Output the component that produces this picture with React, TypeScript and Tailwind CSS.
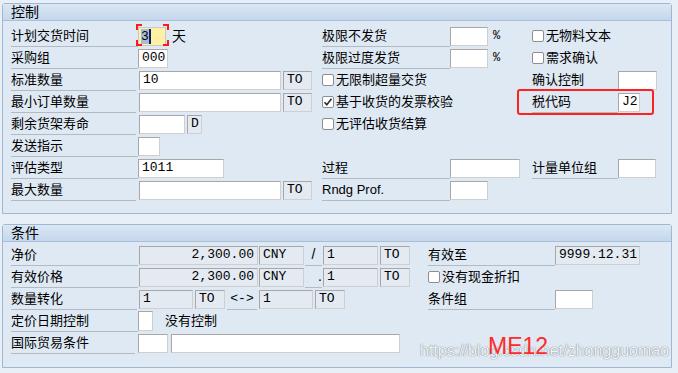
// ME12 采购信息记录 — 控制 / 条件 屏幕
import type { ReactNode } from 'react';

const FONT = "font-['Liberation_Sans','Noto_Sans_CJK_SC',sans-serif]";
const MONO = "font-['Liberation_Mono','Noto_Sans_CJK_SC',monospace]";

function Label({ className = '', children }: { className?: string; children?: ReactNode }) {
  return (
    <div className={`h-[21px] border-b border-[#b3bac2] flex items-center text-[13px] text-black whitespace-nowrap ${className}`}>
      {children}
    </div>
  );
}

function Field({
  className = '',
  value = '',
  readOnly = false,
  right = false,
}: {
  className?: string;
  value?: string;
  readOnly?: boolean;
  right?: boolean;
}) {
  return (
    <div
      className={`h-[19px] border border-[#a7a7a7] border-b-[#cfcfcf] border-r-[#cfcfcf] flex items-center px-[3px] text-[13px] text-black whitespace-nowrap overflow-hidden ${MONO} ${
        readOnly ? 'bg-[#e3eaf1]' : 'bg-white'
      } ${right ? 'justify-end' : ''} ${className}`}
    >
      {value}
    </div>
  );
}

function Check({ label, checked = false }: { label: string; checked?: boolean }) {
  return (
    <div className="flex items-center h-[21px] text-[13px] whitespace-nowrap">
      <div className="w-[12px] h-[12px] border border-[#8e8e8e] bg-white rounded-[2px] mr-[2px] flex items-center justify-center">
        {checked && (
          <svg width="10" height="10" viewBox="0 0 10 10">
            <path d="M1.5 5.2 L3.8 7.8 L8.5 1.8" fill="none" stroke="#2b2b3a" strokeWidth="1.6" />
          </svg>
        )}
      </div>
      {label}
    </div>
  );
}

function Panel({ title, className = '', children }: { title: string; className?: string; children: ReactNode }) {
  return (
    <div className={`w-[670px] border border-[#9fb7d2] rounded-t-[3px] bg-[#dfe9f4] ${className}`}>
      <div className="h-[17px] border-b border-[#a9bfd8] bg-gradient-to-b from-[#dbe7f4] to-[#c4d7ec] flex items-center pl-[8px] text-[14px] text-black">
        {title}
      </div>
      {children}
    </div>
  );
}

const Row = ({ children }: { children: ReactNode }) => <div className="flex h-[22px] items-center">{children}</div>;

export default function App() {
  return (
    <div className={`relative w-[678px] h-[373px] overflow-hidden bg-[#e8eff6] pt-[3px] px-[2px] ${FONT}`}>
      {/* 控制 */}
      <Panel title="控制" className="h-[211px]">
        <div className="pt-[4px] pl-[8px]">
          <Row>
            <div className="flex w-[311px] items-center">
              <Label className="w-[127px]">计划交货时间</Label>
              <div className="h-[19px] w-[28px] bg-[#fff1a4] border border-[#c8c8c8] flex items-center px-[2px]">
                <span className={`bg-[#a9bcd6] text-[13px] leading-[15px] ${MONO}`}>3</span>
                <span className="w-[2px] h-[15px] bg-[#102060]" />
              </div>
              <span className="ml-[6px] text-[14px]">天</span>
            </div>
            <div className="flex w-[210px] items-center">
              <Label className="w-[128px]">极限不发货</Label>
              <Field className="w-[38px]" />
              <span className={`ml-[5px] text-[12px] ${MONO}`}>%</span>
            </div>
            <Check label="无物料文本" />
          </Row>
          <Row>
            <div className="flex w-[311px] items-center">
              <Label className="w-[127px]">采购组</Label>
              <Field className="w-[30px]" value="000" />
            </div>
            <div className="flex w-[210px] items-center">
              <Label className="w-[128px]">极限过度发货</Label>
              <Field className="w-[38px]" />
              <span className={`ml-[5px] text-[12px] ${MONO}`}>%</span>
            </div>
            <Check label="需求确认" />
          </Row>
          <Row>
            <div className="flex w-[311px] items-center gap-[2px]">
              <Label className="w-[125px] mr-[1px]">标准数量</Label>
              <Field className="w-[142px]" value="10" />
              <Field className="w-[29px]" value="TO" readOnly />
            </div>
            <div className="flex w-[210px] items-center">
              <Check label="无限制超量交货" />
            </div>
            <Label className="w-[86px]">确认控制</Label>
            <Field className="w-[39px]" />
          </Row>
          <Row>
            <div className="flex w-[311px] items-center gap-[2px]">
              <Label className="w-[125px] mr-[1px]">最小订单数量</Label>
              <Field className="w-[142px]" />
              <Field className="w-[29px]" value="TO" readOnly />
            </div>
            <div className="flex w-[210px] items-center">
              <Check label="基于收货的发票校验" checked />
            </div>
            <Label className="w-[86px]">税代码</Label>
            <Field className="w-[22px]" value="J2" />
          </Row>
          <Row>
            <div className="flex w-[311px] items-center gap-[2px]">
              <Label className="w-[125px] mr-[1px]">剩余货架寿命</Label>
              <Field className="w-[46px]" />
              <Field className="w-[15px] px-[1px]" value="D" readOnly />
            </div>
            <div className="flex w-[210px] items-center">
              <Check label="无评估收货结算" />
            </div>
          </Row>
          <Row>
            <div className="flex w-[311px] items-center">
              <Label className="w-[127px]">发送指示</Label>
              <Field className="w-[22px]" />
            </div>
          </Row>
          <Row>
            <div className="flex w-[311px] items-center">
              <Label className="w-[127px]">评估类型</Label>
              <Field className="w-[86px]" value="1011" />
            </div>
            <div className="flex w-[210px] items-center">
              <Label className="w-[128px]">过程</Label>
              <Field className="w-[70px]" />
            </div>
            <Label className="w-[86px]">计量单位组</Label>
            <Field className="w-[38px]" />
          </Row>
          <Row>
            <div className="flex w-[311px] items-center gap-[2px]">
              <Label className="w-[125px] mr-[1px]">最大数量</Label>
              <Field className="w-[142px]" />
              <Field className="w-[29px]" value="TO" readOnly />
            </div>
            <div className="flex w-[210px] items-center">
              <Label className="w-[128px]">Rndg Prof.</Label>
              <Field className="w-[38px]" />
            </div>
          </Row>
        </div>
      </Panel>

      {/* 条件 */}
      <Panel title="条件" className="h-[144px] mt-[10px]">
        <div className="pt-[2px] pl-[8px]">
          <Row>
            <div className="flex w-[417px] items-center gap-[1px]">
              <Label className="w-[127px]">净价</Label>
              <Field className="w-[119px]" value="2,300.00" readOnly right />
              <Field className="w-[45px]" value="CNY" readOnly />
              <Label className="w-[17px] justify-center text-[14px]">/</Label>
              <Field className="w-[55px]" value="1" readOnly />
              <Field className="w-[30px] ml-[1px]" value="TO" readOnly />
            </div>
            <Label className="w-[127px]">有效至</Label>
            <Field className="w-[85px]" value="9999.12.31" readOnly />
          </Row>
          <Row>
            <div className="flex w-[417px] items-center gap-[1px]">
              <Label className="w-[127px]">有效价格</Label>
              <Field className="w-[119px]" value="2,300.00" readOnly right />
              <Field className="w-[45px]" value="CNY" readOnly />
              <Label className="w-[17px] justify-end text-[14px]">.</Label>
              <Field className="w-[55px]" value="1" readOnly />
              <Field className="w-[30px] ml-[1px]" value="TO" readOnly />
            </div>
            <Check label="没有现金折扣" />
          </Row>
          <Row>
            <div className="flex w-[417px] items-center gap-[2px]">
              <Label className="w-[126px]">数量转化</Label>
              <Field className="w-[54px]" value="1" readOnly />
              <Field className="w-[30px]" value="TO" readOnly />
              <Label className={`w-[30px] justify-center text-[13px] ${MONO}`}>&lt;-&gt;</Label>
              <Field className="w-[54px]" value="1" readOnly />
              <Field className="w-[30px]" value="TO" readOnly />
            </div>
            <Label className="w-[127px]">条件组</Label>
            <Field className="w-[38px]" />
          </Row>
          <Row>
            <div className="flex w-[417px] items-center">
              <Label className="w-[127px]">定价日期控制</Label>
              <Field className="w-[15px] h-[20px]" />
              <span className="ml-[12px] text-[13px]">没有控制</span>
            </div>
          </Row>
          <Row>
            <div className="flex w-[417px] items-center gap-[3px]">
              <Label className="w-[124px]">国际贸易条件</Label>
              <Field className="w-[30px]" />
              <Field className="w-[229px]" />
            </div>
          </Row>
        </div>
      </Panel>

      {/* 标注 */}
      <span className="absolute left-[136px] top-[24px] w-[6px] h-[6px] border-l-2 border-t-2 border-[#ff1a1a]" />
      <span className="absolute left-[163px] top-[24px] w-[6px] h-[6px] border-r-2 border-t-2 border-[#ff1a1a]" />
      <span className="absolute left-[136px] top-[40px] w-[6px] h-[6px] border-l-2 border-b-2 border-[#ff1a1a]" />
      <span className="absolute left-[163px] top-[40px] w-[6px] h-[6px] border-r-2 border-b-2 border-[#ff1a1a]" />
      <div className="absolute left-[517px] top-[89px] w-[137px] h-[26px] border-2 border-[#ff2020] rounded-[3px]" />

      <div className="absolute left-[420px] top-[339px] text-[16px] text-[#f2f4f6] [text-shadow:0_0_1px_#7f8a95,0_0_1px_#7f8a95] whitespace-nowrap">
        https://blog.csdn.net/zhongguomao
      </div>
      <div className="absolute left-[488px] top-[335px] text-[23px] text-[#ff2a2a] leading-none">ME12</div>
    </div>
  );
}
